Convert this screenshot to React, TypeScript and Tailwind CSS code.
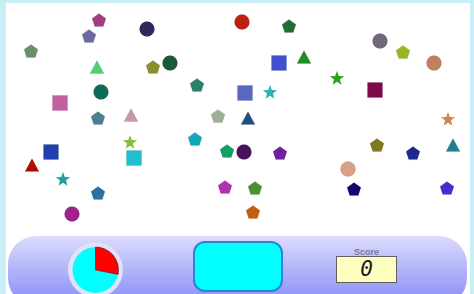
import React from "react";

type Kind = "pent" | "circ" | "sq" | "tri" | "star";
const shapes: [Kind, number, number, string][] = [
  ["pent", 99, 20, "#a43c80"],
  ["circ", 147, 29, "#30285a"],
  ["pent", 89, 36, "#6a6aa0"],
  ["pent", 31, 51, "#6a9068"],
  ["tri", 97, 67, "#50d070"],
  ["pent", 153, 67, "#889028"],
  ["circ", 101, 92, "#106a5a"],
  ["sq", 60, 103, "#c060a0"],
  ["pent", 98, 118, "#4a8090"],
  ["tri", 131, 115, "#c898a8"],
  ["circ", 242, 22, "#c02010"],
  ["pent", 289, 26, "#1f6e38"],
  ["circ", 170, 63, "#1a5a38"],
  ["sq", 279, 63, "#4050d0"],
  ["tri", 304, 57, "#209020"],
  ["pent", 197, 85, "#2a8068"],
  ["sq", 245, 93, "#5868c0"],
  ["star", 270, 92, "#30b0b0"],
  ["pent", 218, 116, "#a0b098"],
  ["tri", 248, 118, "#205080"],
  ["circ", 380, 41, "#706878"],
  ["pent", 403, 52, "#98b820"],
  ["circ", 434, 63, "#c08060"],
  ["star", 337, 78, "#30a020"],
  ["sq", 375, 90, "#800848"],
  ["star", 448, 119, "#d08850"],
  ["star", 130, 142, "#80c040"],
  ["sq", 134, 158, "#20c0d0"],
  ["sq", 51, 152, "#2040b0"],
  ["tri", 32, 165, "#b01000"],
  ["star", 63, 179, "#20a0a0"],
  ["pent", 98, 193, "#2a70a0"],
  ["circ", 72, 214, "#a02090"],
  ["pent", 195, 139, "#10a8b8"],
  ["pent", 227, 151, "#10a060"],
  ["circ", 244, 152, "#481058"],
  ["pent", 280, 153, "#7020a0"],
  ["pent", 225, 187, "#b030b0"],
  ["pent", 255, 188, "#4a9030"],
  ["pent", 253, 212, "#c06010"],
  ["pent", 377, 145, "#807820"],
  ["pent", 413, 153, "#202890"],
  ["tri", 453, 145, "#208090"],
  ["circ", 348, 169, "#d8a088"],
  ["pent", 354, 189, "#100870"],
  ["pent", 447, 188, "#4030d0"],
];

function pts(n: number, cx: number, cy: number, rOut: number, rIn?: number) {
  const out: string[] = [];
  const total = rIn ? n * 2 : n;
  for (let i = 0; i < total; i++) {
    const r = rIn && i % 2 === 1 ? rIn : rOut;
    const a = (Math.PI * 2 * i) / total - Math.PI / 2;
    out.push(`${(cx + r * Math.cos(a)).toFixed(2)},${(cy + r * Math.sin(a)).toFixed(2)}`);
  }
  return out.join(" ");
}

function Shape({ k, x, y, c }: { k: Kind; x: number; y: number; c: string }) {
  const stroke = "rgba(0,0,0,0.12)";
  if (k === "circ") return <circle cx={x} cy={y} r={7.5} fill={c} stroke={stroke} strokeWidth={0.8} />;
  if (k === "sq") return <rect x={x - 7.5} y={y - 7.5} width={15} height={15} fill={c} stroke={stroke} strokeWidth={0.8} />;
  if (k === "tri")
    return <polygon points={`${x},${y - 6.5} ${x + 7},${y + 6.5} ${x - 7},${y + 6.5}`} fill={c} stroke={stroke} strokeWidth={0.6} />;
  if (k === "star") return <polygon points={pts(5, x, y + 0.6, 7.5, 3.1)} fill={c} />;
  return <polygon points={pts(5, x, y + 0.7, 7.3)} fill={c} stroke={stroke} strokeWidth={0.6} />;
}

function Clock() {
  const cx = 29.5, cy = 28, r = 23;
  const th = (101 * Math.PI) / 180;
  const ex = cx + r * Math.sin(th);
  const ey = cy - r * Math.cos(th);
  return (
    <svg width={60} height={62} viewBox="0 0 60 62" className="block">
      <circle cx={cx} cy={cy} r={27.5} fill="#e2e2fa" />
      <circle cx={cx} cy={cy} r={r} fill="#00ffff" />
      <path d={`M${cx},${cy} L${cx},${cy - r} A${r},${r} 0 0 1 ${ex.toFixed(2)},${ey.toFixed(2)} Z`} fill="#ff0000" stroke="#7a1010" strokeWidth={0.6} />
    </svg>
  );
}

export default function App() {
  return (
    <div className="w-[474px] h-[294px] overflow-hidden bg-[#c8eef8] pl-[6px] pt-[3px] pr-[4px]">
      <div className="h-[300px] bg-white flex flex-col">
        <svg width={464} height={233} viewBox="6 3 464 233" className="block shrink-0">
          {shapes.map(([k, x, y, c], i) => (
            <Shape key={i} k={k} x={x} y={y} c={c} />
          ))}
        </svg>
        <div className="ml-[2px] mr-[3px] h-[70px] shrink-0 rounded-[28px] bg-linear-to-b from-[#dcdcfc] to-[#8888f4] flex items-start pl-[58px]">
          <div className="mt-[6px]">
            <Clock />
          </div>
          <div className="ml-[67px] mt-[5px] w-[90px] h-[51px] rounded-[12px] bg-[#00ffff] border-2 border-[#2a84d4]" />
          <div className="ml-[53px] mt-[11px] flex flex-col items-center w-[61px]">
            <div className="text-[9px] leading-[10px] font-bold text-[#7878a0]" style={{ fontFamily: "'Liberation Sans', Arial, sans-serif" }}>
              Score
            </div>
            <div className="mt-[-1px] w-[61px] h-[27px] bg-[#ffffc0] border border-[#606060] flex items-center justify-center">
              <span className="text-[21px] leading-none italic text-[#181818]" style={{ fontFamily: "'DejaVu Sans Mono', monospace" }}>
                0
              </span>
            </div>
          </div>
        </div>
      </div>
    </div>
  );
}
